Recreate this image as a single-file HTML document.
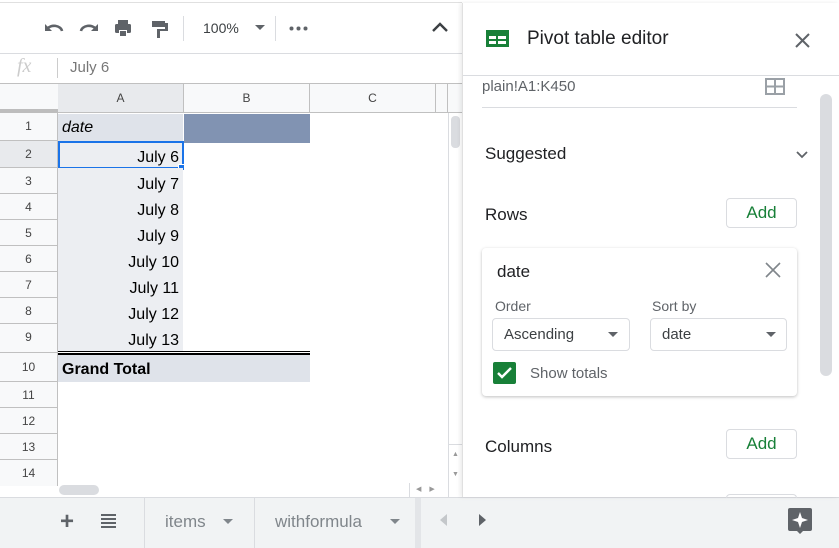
<!DOCTYPE html>
<html><head><style>
*{box-sizing:border-box;margin:0;padding:0}
body{width:839px;height:548px;overflow:hidden;background:#fff;font-family:"Liberation Sans",Arial,sans-serif;position:relative}
.a{position:absolute}
.rh{position:absolute;left:0;width:58px;background:#f8f9fa;border-bottom:1px solid #c0c0c0;border-right:1px solid #c0c0c0;font-size:12px;color:#444;text-align:center;line-height:26px}
.cell{position:absolute;left:58px;width:125px;height:26px;background:#eceef2;font-size:16px;text-align:right;padding-right:4px;line-height:34px;color:#000}
.ic{fill:#5f6368}
</style></head><body>
<div class="a" style="left:0;top:0;width:462px;height:3px;border-bottom:1px solid #e0e0e0"></div>
<div class="a" style="left:0;top:53px;width:462px;height:1px;background:#dadce0"></div>
<svg class="a" style="left:43px;top:18px" width="140" height="22" viewBox="0 0 140 22">
<path d="M4 11a8 6 0 0 1 15 2" stroke="#5f6368" stroke-width="2.6" fill="none"/><path d="M2 6v7h7z" class="ic"/>
<path d="M53 11a8 6 0 0 0 -15 2" stroke="#5f6368" stroke-width="2.6" fill="none"/><path d="M55 6v7h-7z" class="ic"/>
<rect x="75" y="2" width="10" height="4" class="ic"/><rect x="72" y="6" width="16" height="9" rx="1.5" class="ic"/><rect x="76" y="12" width="8" height="6" fill="#fff"/><rect x="77" y="13" width="6" height="5" class="ic"/>
<rect x="109" y="3" width="13" height="6" class="ic"/><rect x="122" y="5" width="3" height="7" class="ic"/><rect x="114" y="11" width="11" height="2" class="ic"/><rect x="114" y="11" width="3" height="9" class="ic"/>
</svg>
<div class="a" style="left:183px;top:16px;width:1px;height:25px;background:#dadce0"></div>
<div class="a" style="left:203px;top:20px;font-size:14px;color:#3c4043">100%</div>
<svg class="a" style="left:255px;top:25px" width="10" height="6"><path d="M0 0h10L5 5z" class="ic"/></svg>
<div class="a" style="left:275px;top:16px;width:1px;height:25px;background:#dadce0"></div>
<svg class="a" style="left:289px;top:26px" width="20" height="5"><circle cx="2.5" cy="2.5" r="2" class="ic"/><circle cx="9.5" cy="2.5" r="2" class="ic"/><circle cx="16.5" cy="2.5" r="2" class="ic"/></svg>
<svg class="a" style="left:432px;top:22px" width="16" height="10"><path d="M1 9l7-7 7 7" stroke="#3c4043" stroke-width="2.4" fill="none"/></svg>
<div class="a" style="left:17px;top:55px;font-size:20px;color:#ccc;font-family:'Liberation Serif',serif;font-style:italic">fx</div>
<div class="a" style="left:57px;top:58px;width:1px;height:20px;background:#ccc"></div>
<div class="a" style="left:70px;top:59px;width:380px;height:18px;font-size:15px;color:#777">July 6</div>
<div class="a" style="left:0;top:83px;width:462px;height:1px;background:#c0c0c0"></div>
<div class="a" style="left:0;top:84px;width:58px;height:29px;background:#f8f9fa;border-bottom:4px solid #bdbdbd"></div>
<div class="a" style="left:58px;top:84px;width:126px;height:29px;background:#e8eaed;border-right:1px solid #c0c0c0;border-bottom:1px solid #c0c0c0;font-size:12px;color:#444;text-align:center;line-height:28px">A</div>
<div class="a" style="left:184px;top:84px;width:126px;height:29px;background:#f8f9fa;border-right:1px solid #c0c0c0;border-bottom:1px solid #c0c0c0;font-size:12px;color:#444;text-align:center;line-height:28px">B</div>
<div class="a" style="left:310px;top:84px;width:126px;height:29px;background:#f8f9fa;border-right:1px solid #c0c0c0;border-bottom:1px solid #c0c0c0;font-size:12px;color:#444;text-align:center;line-height:28px">C</div>
<div class="a" style="left:436px;top:84px;width:12px;height:29px;background:#f8f9fa;border-bottom:1px solid #c0c0c0;border-right:1px solid #c0c0c0"></div>
<div class="a" style="left:448px;top:84px;width:14px;height:29px;background:#f8f9fa;border-bottom:1px solid #c0c0c0"></div>
<div class="rh" style="top:113px;height:28px">1</div>
<div class="rh" style="top:141px;height:27px;background:#e8eaed">2</div>
<div class="rh" style="top:168px;height:26px">3</div>
<div class="rh" style="top:194px;height:26px">4</div>
<div class="rh" style="top:220px;height:26px">5</div>
<div class="rh" style="top:246px;height:26px">6</div>
<div class="rh" style="top:272px;height:26px">7</div>
<div class="rh" style="top:298px;height:26px">8</div>
<div class="rh" style="top:324px;height:29px">9</div>
<div class="rh" style="top:353px;height:29px;line-height:29px">10</div>
<div class="rh" style="top:382px;height:26px">11</div>
<div class="rh" style="top:408px;height:26px">12</div>
<div class="rh" style="top:434px;height:26px">13</div>
<div class="rh" style="top:460px;height:26px;border-bottom:none">14</div>
<div class="cell" style="top:114px;height:27px;background:#dfe3ea;text-align:left;padding-left:4px;font-style:italic;line-height:28px">date</div>
<div class="a" style="left:184px;top:114px;width:126px;height:29px;background:#8193b2"></div>
<div class="cell" style="top:141px">July 6</div>
<div class="a" style="left:58px;top:141px;width:126px;height:28px;border:2px solid #1a73e8"></div>
<div class="a" style="left:178px;top:164px;width:7px;height:7px;background:#1a73e8;border:1px solid #fff"></div>
<div class="cell" style="top:168px">July 7</div>
<div class="cell" style="top:194px">July 8</div>
<div class="cell" style="top:220px">July 9</div>
<div class="cell" style="top:246px">July 10</div>
<div class="cell" style="top:272px">July 11</div>
<div class="cell" style="top:298px">July 12</div>
<div class="cell" style="top:324px;height:27px">July 13</div>
<div class="a" style="left:58px;top:351px;width:252px;height:4px;border-top:1px solid #000;border-bottom:2px solid #000"></div>
<div class="a" style="left:58px;top:355px;width:252px;height:27px;background:#dfe3ea;font-weight:bold;font-size:16px;padding-left:4px;line-height:30px">Grand Total</div>
<div class="a" style="left:448px;top:113px;width:1px;height:384px;background:#dadce0"></div>
<div class="a" style="left:451px;top:116px;width:9px;height:32px;background:#dadce0;border-radius:4px"></div>
<div class="a" style="left:449px;top:444px;width:13px;height:40px;border-top:1px solid #dadce0;font-size:7px;color:#999;text-align:center;line-height:20px">▲<br>▼</div>
<div class="a" style="left:58px;top:483px;width:390px;height:14px;background:#fff"></div>
<div class="a" style="left:59px;top:485px;width:40px;height:10px;background:#dadce0;border-radius:5px"></div>
<div class="a" style="left:409px;top:483px;width:40px;height:14px;border-left:1px solid #dadce0;font-size:7px;color:#999;line-height:14px;padding-left:6px;letter-spacing:8px">◀▶</div>
<div class="a" style="left:0;top:497px;width:839px;height:51px;background:#f1f3f4;border-top:1px solid #dadce0"></div>
<div class="a" style="left:60px;top:508px;font-size:24px;color:#5f6368;font-weight:bold">+</div>
<svg class="a" style="left:101px;top:514px" width="15" height="14"><rect y="0" width="15" height="2" class="ic"/><rect y="4" width="15" height="2" class="ic"/><rect y="8" width="15" height="2" class="ic"/><rect y="12" width="15" height="2" class="ic"/></svg>
<div class="a" style="left:144px;top:498px;width:1px;height:50px;background:#dadce0"></div>
<div class="a" style="left:165px;top:512px;font-size:17px;color:#80868b">items</div>
<svg class="a" style="left:223px;top:519px" width="10" height="5"><path d="M0 0h10L5 5z" fill="#80868b"/></svg>
<div class="a" style="left:254px;top:498px;width:1px;height:50px;background:#dadce0"></div>
<div class="a" style="left:275px;top:512px;font-size:17px;color:#80868b">withformula</div>
<svg class="a" style="left:390px;top:519px" width="10" height="5"><path d="M0 0h10L5 5z" fill="#80868b"/></svg>
<div class="a" style="left:415px;top:498px;width:6px;height:50px;background:#e3e5e8"></div>
<svg class="a" style="left:440px;top:514px" width="8" height="12"><path d="M7 0v12L0 6z" fill="#c4c7ca"/></svg>
<svg class="a" style="left:479px;top:514px" width="8" height="12"><path d="M0 0v12L7 6z" class="ic"/></svg>
<svg class="a" style="left:788px;top:508px" width="24" height="26"><path d="M2 0h20a2 2 0 0 1 2 2v19a2 2 0 0 1-2 2h-7l-3 3-3-3H2a2 2 0 0 1-2-2V2a2 2 0 0 1 2-2z" fill="#5f6368"/><path d="M12 4l2 6 6 2-6 2-2 6-2-6-6-2 6-2z" fill="#fff"/></svg>
<div class="a" style="left:462px;top:3px;width:377px;height:494px;background:#fff;border-left:1px solid #e0e0e0;box-shadow:-2px 0 4px rgba(0,0,0,.08)"></div>
<svg class="a" style="left:486px;top:30px" width="23" height="17"><rect width="23" height="17" fill="#188038"/><rect x="3" y="6" width="7" height="3" fill="#fff"/><rect x="12" y="6" width="8" height="3" fill="#fff"/><rect x="3" y="11" width="7" height="3" fill="#fff"/><rect x="12" y="11" width="8" height="3" fill="#fff"/></svg>
<div class="a" style="left:527px;top:28px;font-size:19px;color:#202124">Pivot table editor</div>
<svg class="a" style="left:795px;top:33px" width="15" height="15"><path d="M1 1l13 13M14 1L1 14" stroke="#5f6368" stroke-width="2"/></svg>
<div class="a" style="left:463px;top:75px;width:376px;height:1px;background:#dadce0"></div>
<div class="a" style="left:482px;top:78px;font-size:15px;color:#5f6368">plain!A1:K450</div>
<svg class="a" style="left:765px;top:78px" width="20" height="17"><rect x="1" y="1" width="18" height="15" fill="none" stroke="#9aa0a6" stroke-width="2"/><path d="M10 1v15M1 8.5h18" stroke="#9aa0a6" stroke-width="2"/></svg>
<div class="a" style="left:482px;top:107px;width:315px;height:1px;background:#dadce0"></div>
<div class="a" style="left:820px;top:94px;width:12px;height:282px;background:#dadce0;border-radius:6px"></div>
<div class="a" style="left:485px;top:144px;font-size:17px;color:#202124">Suggested</div>
<svg class="a" style="left:796px;top:151px" width="12" height="8"><path d="M1 1l5 5 5-5" stroke="#5f6368" stroke-width="1.8" fill="none"/></svg>
<div class="a" style="left:485px;top:205px;font-size:17px;color:#202124">Rows</div>
<div class="a" style="left:726px;top:198px;width:71px;height:30px;border:1px solid #dadce0;border-radius:4px;color:#188038;font-size:17px;text-align:center;line-height:28px">Add</div>
<div class="a" style="left:482px;top:248px;width:315px;height:148px;border-radius:4px;box-shadow:0 1px 3px rgba(0,0,0,.25);background:#fff"></div>
<div class="a" style="left:497px;top:262px;font-size:17px;color:#202124">date</div>
<svg class="a" style="left:765px;top:262px" width="16" height="16"><path d="M1 1l14 14M15 1L1 15" stroke="#80868b" stroke-width="1.6"/></svg>
<div class="a" style="left:495px;top:298px;font-size:14px;color:#5f6368">Order</div>
<div class="a" style="left:652px;top:298px;font-size:14px;color:#5f6368">Sort by</div>
<div class="a" style="left:492px;top:318px;width:138px;height:33px;border:1px solid #dadce0;border-radius:4px;font-size:15px;color:#3c4043;padding:7px 0 0 11px">Ascending</div>
<svg class="a" style="left:608px;top:332px" width="10" height="5"><path d="M0 0h10L5 5z" class="ic"/></svg>
<div class="a" style="left:650px;top:318px;width:137px;height:33px;border:1px solid #dadce0;border-radius:4px;font-size:15px;color:#3c4043;padding:7px 0 0 11px">date</div>
<svg class="a" style="left:766px;top:332px" width="10" height="5"><path d="M0 0h10L5 5z" class="ic"/></svg>
<svg class="a" style="left:493px;top:362px" width="23" height="22"><rect width="23" height="22" rx="2" fill="#188038"/><path d="M5 11l4 4 9-9" stroke="#fff" stroke-width="2.4" fill="none"/></svg>
<div class="a" style="left:530px;top:365px;font-size:15px;color:#5f6368">Show totals</div>
<div class="a" style="left:485px;top:437px;font-size:17px;color:#202124">Columns</div>
<div class="a" style="left:726px;top:429px;width:71px;height:30px;border:1px solid #dadce0;border-radius:4px;color:#188038;font-size:17px;text-align:center;line-height:28px">Add</div>
<div class="a" style="left:726px;top:494px;width:71px;height:4px;border:1px solid #dadce0;border-bottom:none;border-radius:4px 4px 0 0"></div>
</body></html>
